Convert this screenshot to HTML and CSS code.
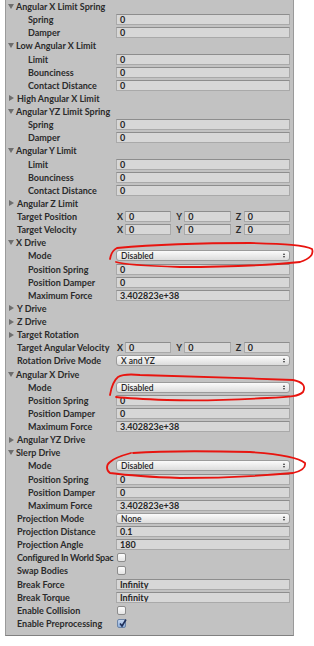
FILE: index.html
```html
<!DOCTYPE html>
<html lang="en">
<head>
    <meta charset="UTF-8">
    <title>Configurable Joint</title>
    <link rel="stylesheet" href="styles.css">
</head>
<body>
    <div class="panel">
        <div class="row fold open"><div class="label"><i class="arrow"></i>Angular X Limit Spring</div></div>
        <div class="row sub"><div class="label">Spring</div><div class="field">0</div></div>
        <div class="row sub"><div class="label">Damper</div><div class="field">0</div></div>
        <div class="row fold open"><div class="label"><i class="arrow"></i>Low Angular X Limit</div></div>
        <div class="row sub"><div class="label">Limit</div><div class="field">0</div></div>
        <div class="row sub"><div class="label">Bounciness</div><div class="field">0</div></div>
        <div class="row sub"><div class="label">Contact Distance</div><div class="field">0</div></div>
        <div class="row fold"><div class="label"><i class="arrow"></i>High Angular X Limit</div></div>
        <div class="row fold open"><div class="label"><i class="arrow"></i>Angular YZ Limit Spring</div></div>
        <div class="row sub"><div class="label">Spring</div><div class="field">0</div></div>
        <div class="row sub"><div class="label">Damper</div><div class="field">0</div></div>
        <div class="row fold open"><div class="label"><i class="arrow"></i>Angular Y Limit</div></div>
        <div class="row sub"><div class="label">Limit</div><div class="field">0</div></div>
        <div class="row sub"><div class="label">Bounciness</div><div class="field">0</div></div>
        <div class="row sub"><div class="label">Contact Distance</div><div class="field">0</div></div>
        <div class="row fold"><div class="label"><i class="arrow"></i>Angular Z Limit</div></div>
        <div class="row"><div class="label">Target Position</div>
            <div class="vec">
                <span class="axis">X</span><div class="field">0</div>
                <span class="axis">Y</span><div class="field">0</div>
                <span class="axis">Z</span><div class="field">0</div>
            </div>
        </div>
        <div class="row"><div class="label">Target Velocity</div>
            <div class="vec">
                <span class="axis">X</span><div class="field">0</div>
                <span class="axis">Y</span><div class="field">0</div>
                <span class="axis">Z</span><div class="field">0</div>
            </div>
        </div>
        <div class="row fold open"><div class="label"><i class="arrow"></i>X Drive</div></div>
        <div class="row sub"><div class="label">Mode</div><div class="popup">Disabled<i class="updown"></i></div></div>
        <div class="row sub"><div class="label">Position Spring</div><div class="field">0</div></div>
        <div class="row sub"><div class="label">Position Damper</div><div class="field">0</div></div>
        <div class="row sub"><div class="label">Maximum Force</div><div class="field">3.402823e+38</div></div>
        <div class="row fold"><div class="label"><i class="arrow"></i>Y Drive</div></div>
        <div class="row fold"><div class="label"><i class="arrow"></i>Z Drive</div></div>
        <div class="row fold"><div class="label"><i class="arrow"></i>Target Rotation</div></div>
        <div class="row"><div class="label">Target Angular Velocity</div>
            <div class="vec">
                <span class="axis">X</span><div class="field">0</div>
                <span class="axis">Y</span><div class="field">0</div>
                <span class="axis">Z</span><div class="field">0</div>
            </div>
        </div>
        <div class="row"><div class="label">Rotation Drive Mode</div><div class="popup">X and YZ<i class="updown"></i></div></div>
        <div class="row fold open"><div class="label"><i class="arrow"></i>Angular X Drive</div></div>
        <div class="row sub"><div class="label">Mode</div><div class="popup">Disabled<i class="updown"></i></div></div>
        <div class="row sub"><div class="label">Position Spring</div><div class="field">0</div></div>
        <div class="row sub"><div class="label">Position Damper</div><div class="field">0</div></div>
        <div class="row sub"><div class="label">Maximum Force</div><div class="field">3.402823e+38</div></div>
        <div class="row fold"><div class="label"><i class="arrow"></i>Angular YZ Drive</div></div>
        <div class="row fold open"><div class="label"><i class="arrow"></i>Slerp Drive</div></div>
        <div class="row sub"><div class="label">Mode</div><div class="popup">Disabled<i class="updown"></i></div></div>
        <div class="row sub"><div class="label">Position Spring</div><div class="field">0</div></div>
        <div class="row sub"><div class="label">Position Damper</div><div class="field">0</div></div>
        <div class="row sub"><div class="label">Maximum Force</div><div class="field">3.402823e+38</div></div>
        <div class="row"><div class="label">Projection Mode</div><div class="popup">None<i class="updown"></i></div></div>
        <div class="row"><div class="label">Projection Distance</div><div class="field">0.1</div></div>
        <div class="row"><div class="label">Projection Angle</div><div class="field">180</div></div>
        <div class="row"><div class="label tight">Configured In World Spac</div><i class="check"></i></div>
        <div class="row"><div class="label">Swap Bodies</div><i class="check"></i></div>
        <div class="row"><div class="label">Break Force</div><div class="field">Infinity</div></div>
        <div class="row"><div class="label">Break Torque</div><div class="field">Infinity</div></div>
        <div class="row"><div class="label">Enable Collision</div><i class="check"></i></div>
        <div class="row"><div class="label">Enable Preprocessing</div>
            <i class="check on">
                <svg width="9" height="9" viewBox="0 0 9 9"><path d="M2 4.5 L4 7 L8 0.5" fill="none" stroke="#1f2f5a" stroke-width="1.6"/></svg>
            </i>
        </div>
    </div>

    <!-- red marker scribbles drawn over the screenshot -->
    <svg class="marks" width="314" height="646" viewBox="0 0 314 646">
        <path d="M110 259 C111 253 113 250 117 248 C150 245 200 243 250 243 C285 244 305 245 312 249 C314 254 310 259 300 262 C270 265 220 267 180 267 C150 266 125 265 116 262"/>
        <path d="M110 395 C111 389 113 381 118 377 C123 374 130 374 140 375 C180 376 240 378 293 380 C303 382 306 386 303 392 C299 396 292 397 267 398 C233 400 200 401 167 400 C140 399 125 398 116 397"/>
        <path d="M133 453 C160 451 210 451 250 452 C280 454 298 457 305 463 C306 468 301 471 293 473 C260 476 215 478 180 478 C150 477 125 475 110 473 C106 470 106 465 110 462 C114 458 120 456 131 453"/>
    </svg>
</body>
</html>
```

FILE: styles.css
```css
/* Inspector look */
body {
    margin: 0;
    background: #fff;
    font-family: Lato, "Liberation Sans", sans-serif;
    font-size: 9px;
    font-weight: 700;
    color: #2b2b2b;
    position: relative;
}
.panel {
    margin-left: 5px;
    width: 289px;
    box-sizing: border-box;
    background: #c2c2c2;
    border-left: 1px solid #9a9a9a;
    border-right: 1px solid #9a9a9a;
    border-bottom: 1px solid #808080;
    padding: 0 3px 4.5px 0;
}
.row {
    display: flex;
    align-items: center;
    height: 13.14px;
}
.label {
    flex: none;
    width: 110px;
    padding-left: 11px;
    box-sizing: border-box;
    white-space: nowrap;
    overflow: hidden;
}
.label.tight {
    letter-spacing: -0.25px;
}
.row.sub .label {
    padding-left: 22px;
}
.row.fold .label {
    padding-left: 2px;
    display: flex;
    align-items: center;
}

/* foldout arrows */
.arrow {
    display: inline-block;
    width: 0;
    height: 0;
    margin-right: 3px;
    border-top: 3px solid transparent;
    border-bottom: 3px solid transparent;
    border-left: 5px solid #6e6e6e;
    margin-left: 1px;
}
.fold.open .arrow {
    border-left: 3px solid transparent;
    border-right: 3px solid transparent;
    border-top: 5px solid #6e6e6e;
    border-bottom: 0;
    margin-left: 0;
    margin-right: 2px;
}

/* inputs */
.field {
    flex: 1;
    min-width: 0;
    height: 11px;
    line-height: 10px;
    box-sizing: border-box;
    background: #d7d7d7;
    border: 1px solid #a9a9a9;
    border-top-color: #8d8d8d;
    padding-left: 3px;
    color: #262626;
    white-space: nowrap;
    overflow: hidden;
}
.vec {
    flex: 1;
    display: flex;
    align-items: center;
}
.axis {
    width: 8px;
    padding-left: 1px;
    flex: none;
}
.vec .field + .axis {
    margin-left: 4px;
}
.popup {
    flex: 1;
    position: relative;
    height: 11px;
    line-height: 10px;
    box-sizing: border-box;
    padding-left: 4px;
    border: 1px solid #9b9b9b;
    border-radius: 3px;
    background: linear-gradient(#fbfbfb, #dcdcdc);
    font-size: 8.5px;
    font-weight: 600;
    color: #262626;
}
.updown {
    position: absolute;
    right: 4px;
    top: 2px;
    width: 0;
    height: 0;
    border-left: 1.5px solid transparent;
    border-right: 1.5px solid transparent;
    border-bottom: 2px solid #333;
}
.updown::after {
    content: "";
    position: absolute;
    left: -1.5px;
    top: 3px;
    border-left: 1.5px solid transparent;
    border-right: 1.5px solid transparent;
    border-top: 2px solid #333;
}
.check {
    display: block;
    width: 9px;
    height: 9px;
    margin-left: 1px;
    box-sizing: border-box;
    border: 1px solid #8c8c8c;
    border-radius: 2px;
    background: linear-gradient(#fdfdfd, #e4e4e4);
    position: relative;
}
.check.on {
    background: linear-gradient(#c4d5ee, #8fb0dc);
    border-color: #6b84a8;
}
.check svg {
    position: absolute;
    left: 0;
    top: -1px;
}

/* annotation layer */
.marks {
    position: absolute;
    top: 0;
    left: 0;
    pointer-events: none;
}
.marks path {
    fill: none;
    stroke: #e8140f;
    stroke-width: 1.8;
    stroke-linecap: round;
}
```
